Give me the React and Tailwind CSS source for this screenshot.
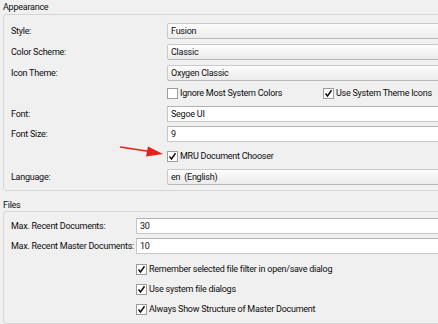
import React from "react";

const font = { fontFamily: 'Roboto, "Noto Sans", sans-serif' };
const txt = "text-[9px] leading-none text-[#0d0d0d] tracking-[-0.25px]";

function Combo({ value }) {
  return (
    <div className={"h-[16px] flex-1 border border-[#c9c9c9] border-b-[#b9b9b9] rounded-[2px] bg-gradient-to-b from-[#fdfdfd] to-[#ebebeb] flex items-center pl-[3px] whitespace-pre " + txt}>
      {value}
    </div>
  );
}

function Input({ value }) {
  return (
    <div className={"h-[16px] flex-1 border border-[#c6c6c6] border-t-[#b2b2b2] bg-white flex items-center pl-[3px] " + txt}>
      {value}
    </div>
  );
}

function Check({ label, checked }) {
  return (
    <div className={"h-[16px] flex items-center " + txt}>
      <div className="w-[11px] h-[11px] border border-[#9c9c9c] bg-white flex items-center justify-center shrink-0">
        {checked && (
          <svg width="9" height="9" viewBox="0 0 9 9">
            <path d="M1.5 4.6 L3.5 7 L7.5 1.2" stroke="#111" strokeWidth="1.5" fill="none" />
          </svg>
        )}
      </div>
      <span className="ml-[2px] whitespace-nowrap">{label}</span>
    </div>
  );
}

function Row({ label, w, className = "", children }) {
  return (
    <div className={"flex items-center h-[16px] " + className}>
      <div className={"shrink-0 whitespace-nowrap " + w + " " + txt}>{label}</div>
      {children}
    </div>
  );
}

export default function App() {
  return (
    <div className="w-[438px] h-[324px] overflow-hidden bg-[#f0f0f0] relative" style={font}>
      <div className="w-[480px] pl-[3px]">
        <div className={"h-[14px] flex items-center pt-[1px] " + txt}>Appearance</div>
        <div className="border border-[#d6d6d6] rounded-[3px] pt-[8px] pl-[7px] h-[177px]">
          <Row label="Style:" w="w-[156px]">
            <Combo value="Fusion" />
          </Row>
          <Row label="Color Scheme:" w="w-[156px]" className="mt-[5px]">
            <Combo value="Classic" />
          </Row>
          <Row label="Icon Theme:" w="w-[156px]" className="mt-[5px]">
            <Combo value="Oxygen Classic" />
          </Row>
          <Row label="" w="w-[156px]" className="mt-[5px] !h-[15px]">
            <div className="w-[156px]">
              <Check label="Ignore Most System Colors" />
            </div>
            <Check label="Use System Theme Icons" checked />
          </Row>
          <Row label="Font:" w="w-[156px]" className="mt-[5px]">
            <Input value="Segoe UI" />
          </Row>
          <Row label="Font Size:" w="w-[156px]" className="mt-[4px]">
            <Input value="9" />
          </Row>
          <Row label="" w="w-[156px]" className="mt-[6px]">
            <Check label="MRU Document Chooser" checked />
          </Row>
          <Row label="Language:" w="w-[156px]" className="mt-[5px]">
            <Combo value="en  (English)" />
          </Row>
        </div>
        <div className={"h-[20px] flex items-end pb-[1px] " + txt}>Files</div>
        <div className="border border-[#d6d6d6] rounded-[3px] pt-[6px] pl-[7px] h-[113px]">
          <Row label="Max. Recent Documents:" w="w-[125px]">
            <Input value="30" />
          </Row>
          <Row label="Max. Recent Master Documents:" w="w-[125px]" className="mt-[4px]">
            <Input value="10" />
          </Row>
          <div className="pl-[125px] flex flex-col gap-[4px] mt-[7px]">
            <Check label="Remember selected file filter in open/save dialog" checked />
            <Check label="Use system file dialogs" checked />
            <Check label="Always Show Structure of Master Document" checked />
          </div>
        </div>
      </div>
      <svg className="absolute left-0 top-0 pointer-events-none" width="438" height="324">
        <line x1="120" y1="147" x2="150" y2="151.5" stroke="#e8201c" strokeWidth="1.6" />
        <polygon points="148,146.5 163,154 146,156.5" fill="#e8201c" />
      </svg>
    </div>
  );
}
